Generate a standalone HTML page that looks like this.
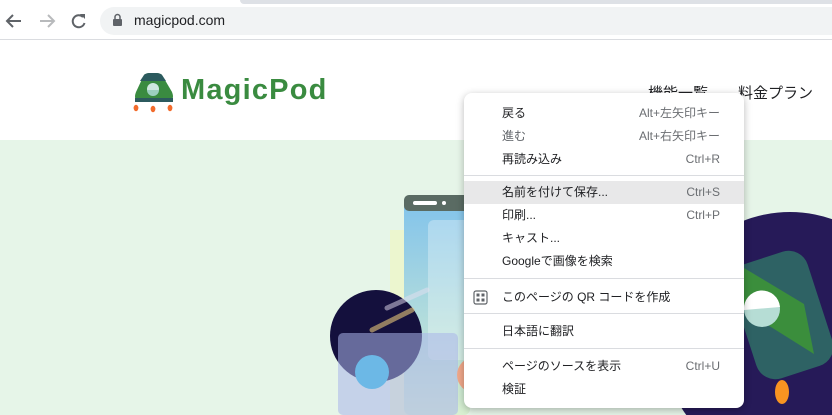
<!DOCTYPE html>
<html style="width:832px;height:415px;overflow:hidden"><head><meta charset="utf-8"><style>
*{margin:0;padding:0;box-sizing:border-box}
body{width:832px;height:415px;overflow:hidden;position:relative;background:#fff;font-family:"Liberation Sans","Noto Sans CJK JP",sans-serif}
.abs{position:absolute}
.menu{position:absolute;left:464px;top:93px;width:280px;height:315px;background:#fff;border-radius:8px;box-shadow:0 2px 8px rgba(0,0,0,.28);font-size:12px;color:#202124}
.it{position:absolute;left:0;right:0;height:23px;line-height:23px;padding-left:38px}
.it .k{position:absolute;right:24px;top:0;color:#6b6e72}
.sep{position:absolute;left:0;right:0;height:1px;background:#dadce0}
</style></head><body>
<div class="abs" style="left:240px;top:0;width:592px;height:4px;background:#dee1e6;border-radius:0 0 0 6px"></div>
<svg class="abs" style="left:0;top:8px" width="100" height="26" viewBox="0 0 100 26">
<path d="M21 13H8M13 7l-6 6 6 6" stroke="#5f6368" stroke-width="2" fill="none"/>
<path d="M40 13h13M48 7l6 6-6 6" stroke="#b8babc" stroke-width="2" fill="none"/>
<path d="M83 9a6 6 0 1 0 1.5 6" stroke="#5f6368" stroke-width="2" fill="none"/><path d="M80 6h5v5z" fill="#5f6368"/>
</svg>
<div class="abs" style="left:100px;top:7px;width:732px;height:28px;background:#f1f3f4;border-radius:14px 0 0 14px"></div>
<svg class="abs" style="left:112px;top:13px" width="12" height="14"><rect x="1" y="6" width="9" height="7" rx="1" fill="#5f6368"/><path d="M3 6V4a2.5 2.5 0 0 1 5 0v2" stroke="#5f6368" stroke-width="1.5" fill="none"/></svg>
<div class="abs" style="left:134px;top:12px;font-size:14px;color:#202124">magicpod.com</div>
<div class="abs" style="left:0;top:39px;width:832px;height:1px;background:#dadce0"></div>
<svg class="abs" style="left:132px;top:73px" width="44" height="42" viewBox="0 0 44 42">
<path d="M12 2Q14 0 18 0h6q4 0 6 2l10 17q3 8-3 9H7q-6-1-3-9z" fill="#3a8b40"/>
<path d="M12 2Q14 0 18 0h6q4 0 6 2l4 6H8z" fill="#2c5a5e"/>
<rect x="3" y="25" width="38" height="4" fill="#2c5a5e"/>
<circle cx="21" cy="16" r="6" fill="#cfe7df"/><path d="M15 17a6 6 0 0 0 12 0z" fill="#9ccfbf"/>
<ellipse cx="4" cy="35" rx="2.4" ry="3.2" fill="#f26b2c"/><ellipse cx="21" cy="36" rx="2.4" ry="3.2" fill="#f26b2c"/><ellipse cx="38" cy="35" rx="2.4" ry="3.2" fill="#f26b2c"/>
</svg>
<div class="abs" style="left:181px;top:74px;font-size:29px;font-weight:bold;color:#3a8b40;letter-spacing:1.2px">MagicPod</div>
<div class="abs" style="left:648px;top:82px;font-size:15px;color:#202124">機能一覧</div>
<div class="abs" style="left:738px;top:82px;font-size:15px;color:#202124">料金プラン</div>
<div class="abs" style="left:0;top:140px;width:832px;height:275px;background:#e6f5e8"></div>
<svg class="abs" style="left:0;top:140px" width="832" height="275" viewBox="0 140 832 275">
<defs><linearGradient id="sc" x1="0" y1="0" x2="0" y2="1"><stop offset="0" stop-color="#80c2ec"/><stop offset="1" stop-color="#d8f0d0"/></linearGradient></defs>
<rect x="390" y="230" width="70" height="185" fill="#eef6c8" opacity=".8"/>
<rect x="404" y="195" width="66" height="220" rx="6" fill="url(#sc)"/>
<rect x="404" y="195" width="66" height="16" rx="5" fill="#5a6b63"/>
<rect x="413" y="201" width="24" height="4" rx="2" fill="#fff"/><circle cx="444" cy="203" r="2" fill="#fff"/>
<rect x="428" y="220" width="42" height="140" rx="6" fill="#fff" opacity=".3"/>
<circle cx="376" cy="336" r="46" fill="#14103d"/>
<path d="M387 308l40-18" stroke="#e6e0f0" stroke-width="5" opacity=".5" stroke-linecap="round"/>
<path d="M372 330l40-20" stroke="#e7c67a" stroke-width="5" opacity=".6" stroke-linecap="round"/>
<rect x="338" y="333" width="120" height="82" rx="5" fill="#a9b4ea" opacity=".55"/>
<circle cx="372" cy="372" r="17" fill="#6cb8e6"/>
<circle cx="790" cy="340" r="128" fill="#261a58"/>
<rect x="742" y="255" width="80" height="120" rx="20" fill="#2e6264" transform="rotate(-18 782 315)"/>
<path d="M744 268l60 36 10 50-70-44z" fill="#3b8e3c"/>
<circle cx="762" cy="309" r="18" fill="#b6ddd5"/><path d="M744 310a18 18 0 0 1 36-3z" fill="#fff"/>
<ellipse cx="782" cy="392" rx="7" ry="12" fill="#f79421"/>
<circle cx="475" cy="375" r="18" fill="#f0a88a"/>
</svg>
<div class="menu">
<div class="it" style="top:9px">戻る<span class="k">Alt+左矢印キー</span></div>
<div class="it" style="top:32px;color:#5f6368">進む<span class="k">Alt+右矢印キー</span></div>
<div class="it" style="top:55px">再読み込み<span class="k">Ctrl+R</span></div>
<div class="sep" style="top:82px"></div>
<div class="it" style="top:88px;background:#e8e8e9">名前を付けて保存...<span class="k">Ctrl+S</span></div>
<div class="it" style="top:111px">印刷...<span class="k">Ctrl+P</span></div>
<div class="it" style="top:134px">キャスト...</div>
<div class="it" style="top:157px">Googleで画像を検索</div>
<div class="sep" style="top:185px"></div>
<svg class="abs" style="left:9px;top:197px" width="15" height="15" viewBox="0 0 15 15"><rect x="1" y="1" width="13" height="13" rx="2" fill="none" stroke="#5f6368" stroke-width="1.2"/><rect x="3.5" y="3.5" width="3" height="3" fill="#5f6368"/><rect x="8.5" y="3.5" width="3" height="3" fill="#5f6368"/><rect x="3.5" y="8.5" width="3" height="3" fill="#5f6368"/><rect x="8.5" y="8.5" width="3" height="3" fill="#5f6368"/></svg>
<div class="it" style="top:193px">このページの QR コードを作成</div>
<div class="sep" style="top:220px"></div>
<div class="it" style="top:227px">日本語に翻訳</div>
<div class="sep" style="top:255px"></div>
<div class="it" style="top:262px">ページのソースを表示<span class="k">Ctrl+U</span></div>
<div class="it" style="top:285px">検証</div>
</div>
</body></html>
